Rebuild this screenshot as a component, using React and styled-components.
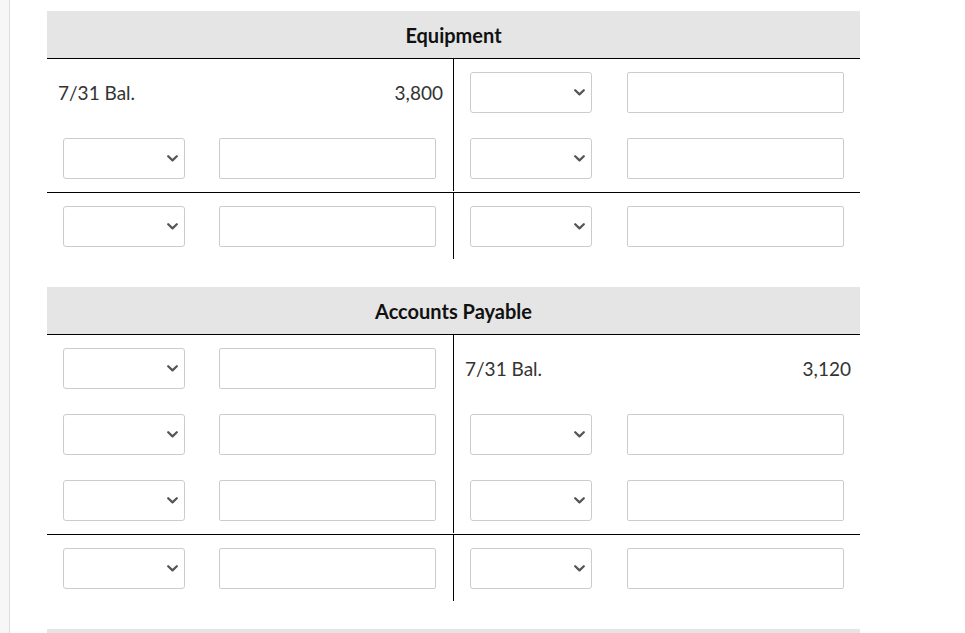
import React from 'react';
import styled, { createGlobalStyle } from 'styled-components';

const GlobalStyle = createGlobalStyle`
  html, body {
    margin: 0;
    padding: 0;
    background: #ffffff;
    font-family: Lato, 'Liberation Sans', Arial, sans-serif;
  }
`;

const accounts = [
  {
    title: 'Equipment',
    debitBalance: '3,800',
    top: 2,
    bottom: 1,
  },
  {
    title: 'Accounts Payable',
    creditBalance: '3,120',
    top: 3,
    bottom: 1,
  },
];

const Chevron = () => (
  <svg width="11" height="7" viewBox="0 0 11 7">
    <polyline
      points="1.2,1.2 5.5,5.4 9.8,1.2"
      fill="none"
      stroke="#555"
      strokeWidth="2.2"
      strokeLinecap="round"
      strokeLinejoin="round"
    />
  </svg>
);

const EntryRow = () => (
  <Row>
    <SelectBox>
      <Chevron />
    </SelectBox>
    <AmountInput type="text" />
  </Row>
);

const BalanceLine = ({ amount }) => (
  <BalanceRow>
    <span>7/31 Bal.</span>
    <span>{amount}</span>
  </BalanceRow>
);

const Side = ({ balance, rows, right }) => (
  <Column $right={right}>
    {balance && <BalanceLine amount={balance} />}
    {Array.from({ length: rows }).map((_, i) => (
      <EntryRow key={i} />
    ))}
  </Column>
);

const TAccount = ({ account }) => {
  const { title, debitBalance, creditBalance, top, bottom } = account;
  const leftTop = debitBalance ? top - 1 : top;
  const rightTop = creditBalance ? top - 1 : top;
  return (
    <Account>
      <Header>{title}</Header>
      <Section>
        <Side balance={debitBalance} rows={leftTop} />
        <Side balance={creditBalance} rows={rightTop} right />
      </Section>
      <Section $totals>
        <Side rows={bottom} />
        <Side rows={bottom} right />
      </Section>
    </Account>
  );
};

const App = () => (
  <>
    <GlobalStyle />
    <Page>
      <Gutter />
      <Content>
        {accounts.map((a) => (
          <TAccount key={a.title} account={a} />
        ))}
        <NextHeader />
      </Content>
    </Page>
  </>
);

export default App;

const Page = styled.div`
  display: flex;
  height: 633px;
  overflow: hidden;
`;

const Gutter = styled.div`
  width: 9px;
  flex-shrink: 0;
  background: #f7f7f7;
  border-right: 1px solid #dedede;
`;

const Content = styled.div`
  width: 813px;
  margin-left: 37px;
  padding-top: 11px;
  display: flex;
  flex-direction: column;
  gap: 28px;
`;

const Account = styled.div`
  display: flex;
  flex-direction: column;
`;

const Header = styled.div`
  height: 47px;
  background: #e5e5e5;
  border-bottom: 1px solid #000;
  display: flex;
  align-items: center;
  justify-content: center;
  font-weight: 700;
  font-size: 20px;
  color: #111;
`;

const Section = styled.div`
  display: grid;
  grid-template-columns: 407px 406px;
  border-top: ${(p) => (p.$totals ? '1px solid #000' : 'none')};
  padding-bottom: ${(p) => (p.$totals ? '0' : '1px')};
`;

const Column = styled.div`
  border-right: ${(p) => (p.$right ? 'none' : '1px solid #000')};
  padding: 0 ${(p) => (p.$right ? '16px' : '17px')} 0 16px;
  display: flex;
  flex-direction: column;
`;

const Row = styled.div`
  height: 66px;
  display: grid;
  grid-template-columns: 122px 217px;
  justify-content: space-between;
  align-items: center;
`;

const BalanceRow = styled.div`
  height: 66px;
  margin: 0 -7px 0 -5px;
  display: flex;
  align-items: center;
  justify-content: space-between;
  font-size: 19px;
  color: #333;
`;

const SelectBox = styled.div`
  box-sizing: border-box;
  height: 41px;
  border: 1px solid #cccccc;
  border-radius: 3px;
  background: #fff;
  display: flex;
  align-items: center;
  justify-content: flex-end;
  padding-right: 6px;
`;

const AmountInput = styled.input`
  box-sizing: border-box;
  height: 41px;
  width: 100%;
  border: 1px solid #cccccc;
  border-radius: 2px;
  background: #fff;
  outline: none;
  font: inherit;
`;

const NextHeader = styled.div`
  flex-shrink: 0;
  height: 47px;
  background: #e5e5e5;
`;
